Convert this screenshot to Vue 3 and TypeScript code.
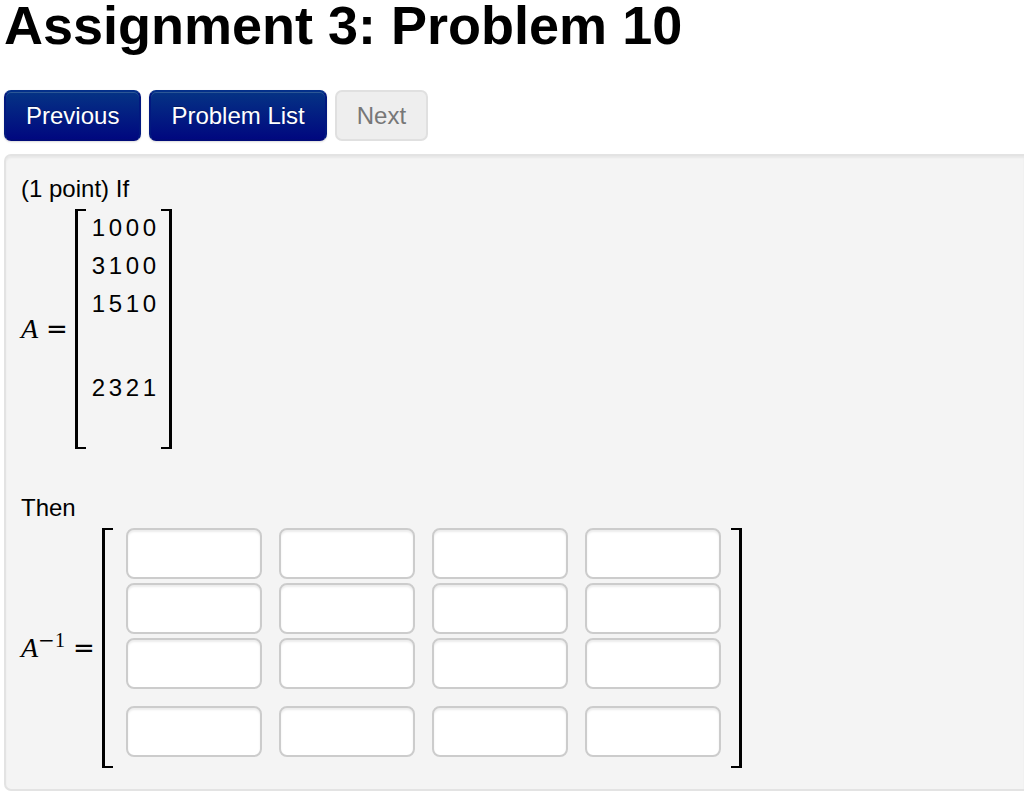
<script setup lang="ts">
import { ref } from 'vue'

const matrix: number[][] = [
  [1, 0, 0, 0],
  [3, 1, 0, 0],
  [1, 5, 1, 0],
  [2, 3, 2, 1],
]

const answers = ref<string[][]>(matrix.map((row) => row.map(() => '')))
</script>

<template>
  <main class="page">
    <h1 class="title">Assignment 3: Problem 10</h1>

    <nav class="actions" aria-label="Problem navigation">
      <button type="button" class="btn primary">Previous</button>
      <button type="button" class="btn primary">Problem List</button>
      <button type="button" class="btn" disabled>Next</button>
    </nav>

    <section class="problem">
      <p class="line">(1 point) If</p>
      <div class="equation">
        <div class="lhs"><i class="var">A</i><span class="equals">=</span></div>
        <div class="bracket left"></div>
        <table class="given">
          <tbody>
            <tr v-for="(row, r) in matrix" :key="r">
              <td v-for="(value, c) in row" :key="c">{{ value }}</td>
            </tr>
          </tbody>
        </table>
        <div class="bracket right"></div>
      </div>

      <p class="line then">Then</p>
      <div class="equation">
        <div class="lhs">
          <i class="var">A</i><sup class="power"><span class="minus">−</span>1</sup><span class="equals">=</span>
        </div>
        <div class="bracket left"></div>
        <div class="answers">
          <div v-for="(row, r) in answers" :key="r" class="answer-row">
            <input
              v-for="(_, c) in row"
              :key="c"
              v-model="row[c]"
              type="text"
              class="answer"
              :aria-label="`Row ${r + 1}, column ${c + 1}`"
            />
          </div>
        </div>
        <div class="bracket right"></div>
      </div>
    </section>
  </main>
</template>

<style>
body {
  background: #fff;
}
</style>

<style scoped>
.page {
  padding-left: 4px;
  font-family: "Liberation Sans", Arial, sans-serif;
  font-size: 24px;
  color: #000;
}
.title {
  margin: 0;
  padding-bottom: 40px;
  font-size: 54px;
  line-height: 50px;
  font-weight: bold;
}
.actions {
  display: flex;
  gap: 8px;
}
.btn {
  box-sizing: border-box;
  height: 51px;
  padding: 0 20px;
  border: 2px solid #e0e0e0;
  border-radius: 7px;
  background: #eee;
  color: #777;
  font-family: inherit;
  font-size: 24px;
  line-height: 40px;
}
.btn.primary {
  color: #fff;
  border-color: #04308a #02187f #000a78;
  background: linear-gradient(#053585, #00067f) border-box;
  box-shadow: inset 0 1px 0 #2c5795, 0 1px 2px rgba(0, 0, 0, 0.15);
  text-shadow: 0 -1px 0 rgba(0, 0, 0, 0.25);
}
.problem {
  margin-top: 13px;
  padding: 16px 15px 21px;
  border: 2px solid #e3e3e3;
  border-right: 0;
  border-radius: 7px 0 0 7px;
  background: #f4f4f4;
  box-shadow: inset 0 2px 2px rgba(0, 0, 0, 0.05);
}
.line {
  margin: 0 0 4px;
  line-height: 33px;
}
.then {
  margin-top: 42px;
}
.equation {
  display: flex;
  min-height: 240px;
  align-items: stretch;
}
.lhs {
  align-self: center;
  display: flex;
  align-items: baseline;
  margin-right: 7px;
  font-family: "Liberation Serif", "Times New Roman", serif;
  font-size: 28px;
  line-height: 36px;
}
.equals,
.minus {
  font-family: "DejaVu Sans", sans-serif;
}
.equals {
  margin-left: 8px;
  font-size: 26px;
}
.power {
  position: relative;
  top: -10px;
  font-size: 20px;
  line-height: 20px;
  vertical-align: baseline;
}
.bracket {
  box-sizing: border-box;
  width: 11px;
  border: solid #000;
}
.bracket.left {
  border-width: 2px 0 2px 3px;
}
.bracket.right {
  border-width: 2px 3px 2px 0;
}
.given {
  align-self: flex-start;
  margin: 0 3px 0 4px;
  border-collapse: collapse;
}
.given td {
  width: 17px;
  padding: 0;
  line-height: 38px;
  text-align: center;
}
.given tr:last-child td {
  padding-top: 46px;
}
.answers {
  margin: 0 10px 0 13px;
  display: flex;
  flex-direction: column;
  gap: 4px;
}
.answer-row {
  display: flex;
  gap: 17px;
}
.answer-row:last-child {
  margin-top: 13px;
}
.answer {
  box-sizing: border-box;
  width: 136px;
  height: 51px;
  padding: 8px 12px;
  border: 2px solid #ccc;
  border-radius: 8px;
  background: #fff;
  box-shadow: inset 0 2px 2px rgba(0, 0, 0, 0.075);
  font-family: inherit;
  font-size: 24px;
}
</style>
